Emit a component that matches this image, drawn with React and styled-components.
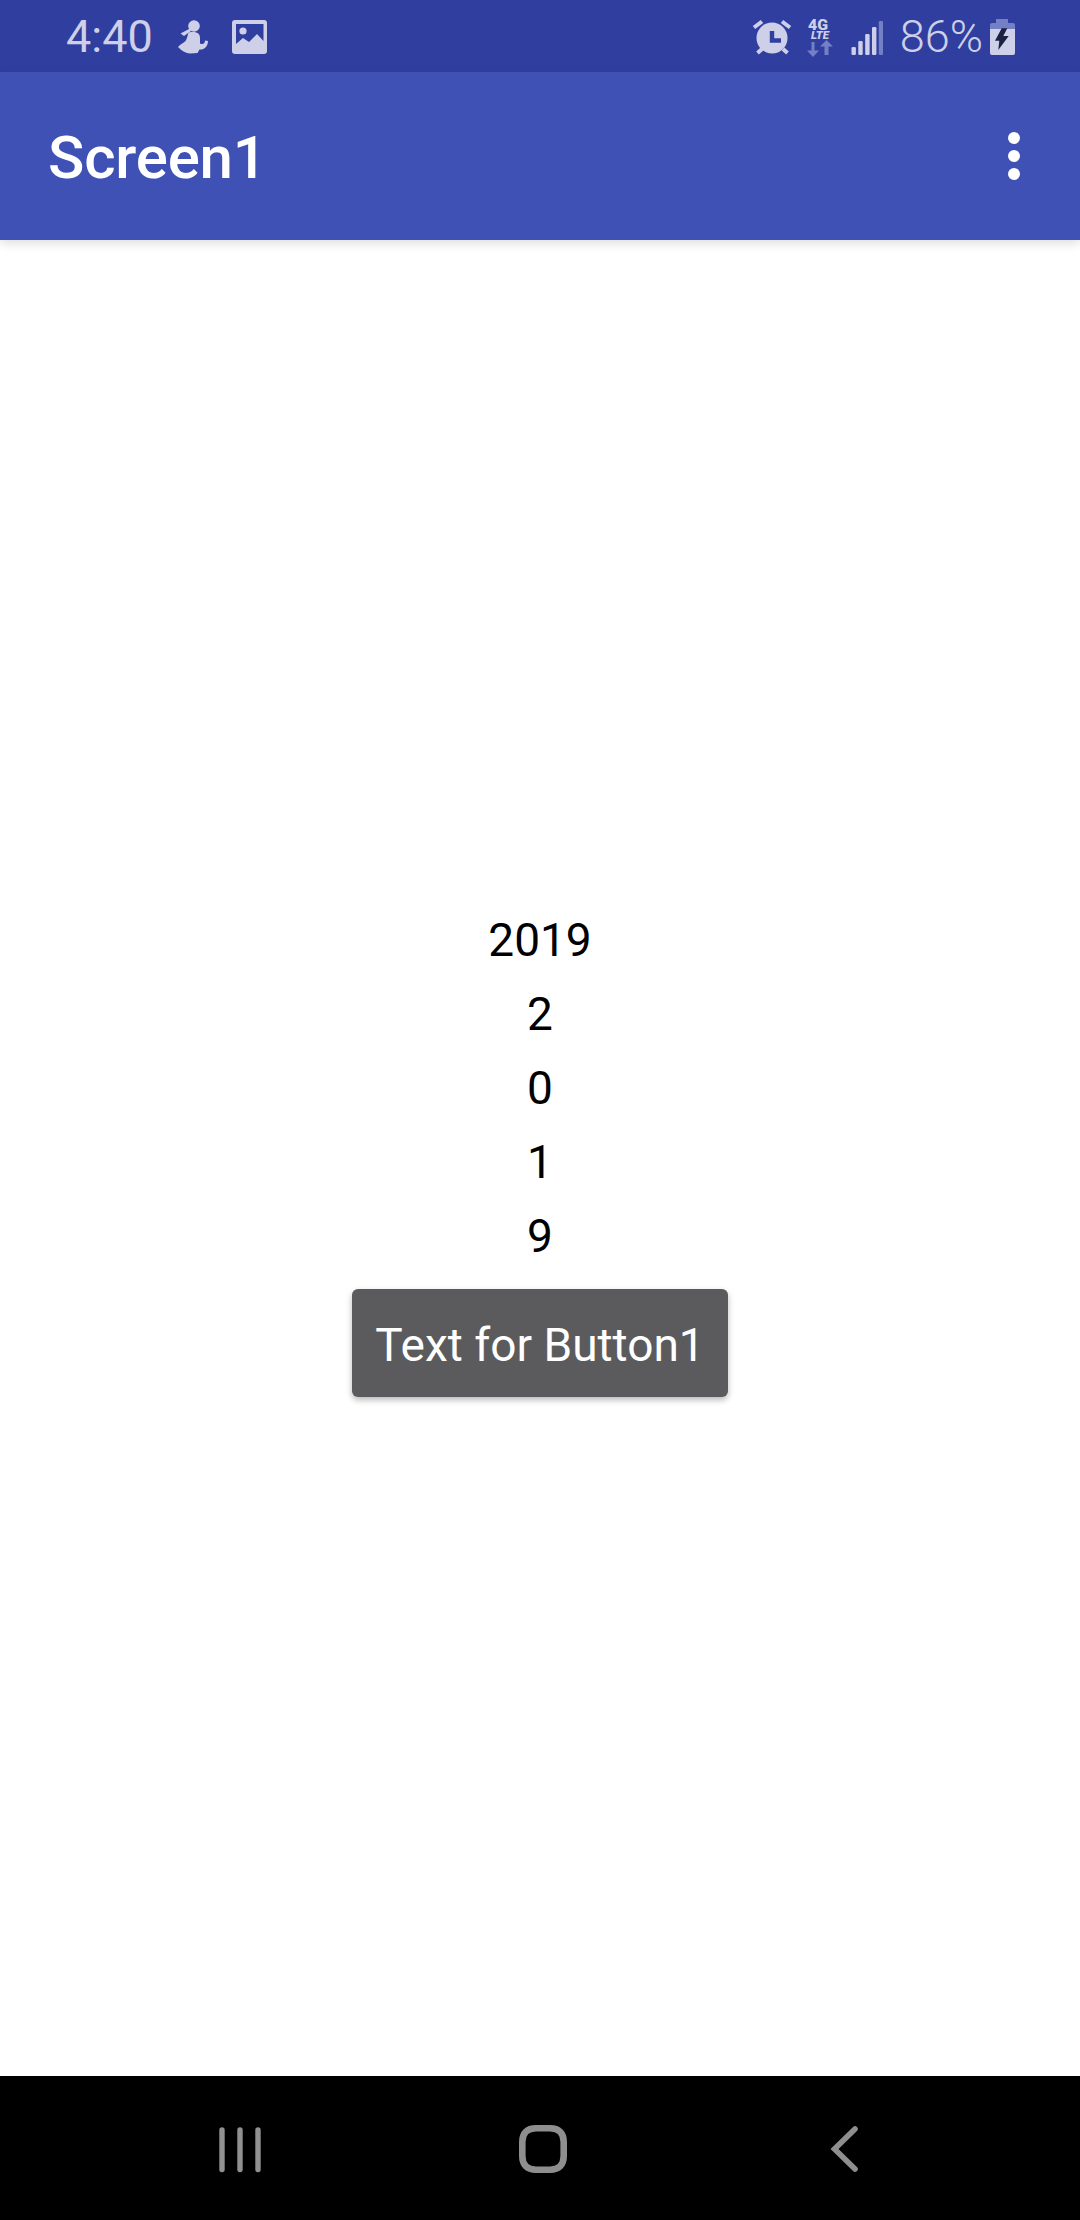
import React from "react";
import styled, { createGlobalStyle } from "styled-components";

const LIGHT = "#cdd0e8";
const DIM = "#7480c6";
const BAR = "#303f9f";

const Global = createGlobalStyle`
  html, body { margin: 0; padding: 0; background: #fff; }
  #root { width: 1080px; height: 2220px; }
  * { box-sizing: border-box; }
`;

const Screen = styled.div`
  width: 1080px;
  height: 2220px;
  display: flex;
  flex-direction: column;
  font-family: Roboto, "Liberation Sans", sans-serif;
  background: #fff;
  overflow: hidden;
`;

const StatusBar = styled.div`
  height: 72px;
  flex: none;
  background: ${BAR};
  display: flex;
  justify-content: space-between;
  padding: 0 65px 0 66px;
  color: ${LIGHT};
`;

const StatusGroup = styled.div`
  display: flex;
  align-items: flex-start;
`;

const StatusText = styled.span`
  font-size: ${(p) => p.$size}px;
  font-weight: ${(p) => p.$weight};
  line-height: 74px;
  height: 72px;
  margin-right: ${(p) => p.$gap}px;
`;

const StatusIcon = styled.svg`
  display: block;
  flex: none;
  margin-right: ${(p) => p.$gap || 0}px;
`;

const AppBar = styled.header`
  height: 168px;
  flex: none;
  background: #3f51b5;
  display: flex;
  align-items: center;
  justify-content: space-between;
  padding: 0 60px 0 48px;
  box-shadow: 0 3px 10px rgba(0, 0, 0, 0.14);
  position: relative;
  z-index: 1;
`;

const Title = styled.h1`
  margin: 0;
  padding-top: 4px;
  color: #fff;
  font-size: 60px;
  font-weight: 500;
  line-height: 164px;
  letter-spacing: -0.2px;
`;

const Overflow = styled.div`
  display: flex;
  flex-direction: column;
  gap: 6px;
`;

const Dot = styled.span`
  width: 12px;
  height: 12px;
  border-radius: 50%;
  background: #fff;
`;

const Content = styled.main`
  flex: 1;
  display: flex;
  flex-direction: column;
  align-items: center;
  justify-content: center;
`;

const Label = styled.div`
  font-size: 46px;
  line-height: 74px;
  height: 74px;
  color: #000;
  text-align: center;
`;

const Button = styled.button`
  margin: 16px 0;
  width: 376px;
  height: 108px;
  padding: 3px 0 0;
  border: 0;
  border-radius: 6px;
  background: #5b5b5d;
  color: #fff;
  font-family: inherit;
  font-size: 46px;
  box-shadow: 0 3px 6px rgba(0, 0, 0, 0.28);
`;

const NavBar = styled.nav`
  height: 144px;
  flex: none;
  background: #000;
  display: flex;
  align-items: center;
  padding: 2px 0 0;
`;

const NavIcon = styled.svg`
  display: block;
  flex: none;
  margin-left: ${(p) => p.$left}px;
`;

const PersonIcon = () => (
  <StatusIcon width="32" height="72" viewBox="177 0 32 72" $gap={23}>
    <circle cx="194" cy="26" r="5.8" fill={LIGHT} />
    <path d="M180.5 33.5 L190 28.5 L191 31 L184 36 Z" fill={LIGHT} />
    <path
      d="M188.5 32.5 C197 31 200 33.5 200 38 L200 43.5 C203 45 205 43.5 205 40.5 L208 41 C208 46.5 204 50 199.5 49.5 L197.5 53 L190 53.4 C186 53.4 182 51 178 47 C180 44 183.5 43.5 185.5 41 C187 39 187.5 36 188.5 32.5 Z"
      fill={LIGHT}
    />
  </StatusIcon>
);

const ImageIcon = () => (
  <StatusIcon width="35" height="72" viewBox="232 0 35 72">
    <rect x="232" y="20" width="35" height="34" rx="3" fill={LIGHT} />
    <path d="M236 24 H263.5 V41 L257 34 L249 42 L243 38 L236 44 Z" fill={BAR} />
    <circle cx="243" cy="31" r="3.6" fill={LIGHT} />
  </StatusIcon>
);

const AlarmIcon = () => (
  <StatusIcon width="40" height="72" viewBox="752 0 40 72" $gap={14}>
    <circle cx="772" cy="38" r="15.5" fill={LIGHT} />
    <path d="M754 27.5 L762 21.5 M790 27.5 L782 21.5 M757.5 53 L762 49 M787.5 53 L783 49" stroke={LIGHT} strokeWidth="4" fill="none" />
    <path d="M772 31 V40.5 H781" stroke={BAR} strokeWidth="4.4" fill="none" />
  </StatusIcon>
);

const NetworkIcon = () => (
  <StatusIcon width="28" height="72" viewBox="806 0 28 72" $gap={17}>
    <text x="808" y="30" fontFamily="Roboto, sans-serif" fontWeight="900" fontSize="15.5" textLength="20" lengthAdjust="spacingAndGlyphs" fill={LIGHT}>4G</text>
    <text x="811" y="39" fontFamily="Roboto, sans-serif" fontWeight="900" fontStyle="italic" fontSize="10.5" textLength="18" lengthAdjust="spacingAndGlyphs" fill={LIGHT}>LTE</text>
    <path d="M811.5 42 H814.5 V50.5 H819 L813 57 L807 50.5 H811.5 Z" fill={DIM} />
    <path d="M826.5 40 L833 46.5 H828.5 V55 H824.5 V46.5 H820 Z" fill={DIM} />
  </StatusIcon>
);

const SignalIcon = () => (
  <StatusIcon width="33" height="72" viewBox="851 0 33 72" $gap={15.5}>
    <rect x="851.5" y="47" width="4.4" height="8" rx="1.2" fill={LIGHT} />
    <rect x="858.3" y="41" width="4.4" height="14" rx="1.2" fill={LIGHT} />
    <rect x="865.2" y="34" width="4.4" height="21" rx="1.2" fill={LIGHT} />
    <rect x="872" y="27" width="4.4" height="28" rx="1.2" fill={LIGHT} />
    <rect x="878.8" y="21" width="4.2" height="34" rx="1.2" fill={DIM} />
  </StatusIcon>
);

const BatteryIcon = () => (
  <StatusIcon width="25" height="72" viewBox="990 0 25 72">
    <path d="M996 19 H1008 V23 H1013 Q1015 23 1015 25 V29 H990 V25 Q990 23 992 23 H996 Z" fill={DIM} />
    <path d="M990 29 H1015 V53 Q1015 55 1013 55 H992 Q990 55 990 53 Z" fill={LIGHT} />
    <path d="M1001.7 28.3 L995 40.7 H999.3 L998.3 50 L1008.7 36 H1003.3 L1007.3 28.3 Z" fill="#1d2040" />
  </StatusIcon>
);

const MenuNavIcon = () => (
  <NavIcon width="44" height="48" viewBox="218 2125 44 48" $left={218}>
    <path d="M222 2130 V2169.5 M240 2130 V2169.5 M258 2130 V2169.5" stroke="#919191" strokeWidth="5.4" strokeLinecap="round" fill="none" />
  </NavIcon>
);

const HomeNavIcon = () => (
  <NavIcon width="50" height="50" viewBox="517 2124 50 50" $left={256}>
    <path
      d="M535 2128.3 H549 C558 2128.3 562.7 2133 562.7 2142 V2156 C562.7 2165 558 2169.7 549 2169.7 H535 C526 2169.7 521.3 2165 521.3 2156 V2142 C521.3 2133 526 2128.3 535 2128.3 Z"
      stroke="#8e8e8e"
      strokeWidth="6.6"
      fill="none"
    />
  </NavIcon>
);

const BackNavIcon = () => (
  <NavIcon width="30" height="50" viewBox="830 2124 30 50" $left={262}>
    <path d="M855 2129 L834.5 2149 L855 2169" stroke="#8e8e8e" strokeWidth="5.6" strokeLinecap="round" strokeLinejoin="miter" fill="none" />
  </NavIcon>
);

export default function App() {
  return (
    <Screen>
      <Global />
      <StatusBar>
        <StatusGroup>
          <StatusText $size={45} $weight={400} $gap={24.5}>4:40</StatusText>
          <PersonIcon />
          <ImageIcon />
        </StatusGroup>
        <StatusGroup>
          <AlarmIcon />
          <NetworkIcon />
          <SignalIcon />
          <StatusText $size={45} $weight={300} $gap={7}>86%</StatusText>
          <BatteryIcon />
        </StatusGroup>
      </StatusBar>
      <AppBar>
        <Title>Screen1</Title>
        <Overflow>
          <Dot />
          <Dot />
          <Dot />
        </Overflow>
      </AppBar>
      <Content>
        <Label>2019</Label>
        <Label>2</Label>
        <Label>0</Label>
        <Label>1</Label>
        <Label>9</Label>
        <Button>Text for Button1</Button>
      </Content>
      <NavBar>
        <MenuNavIcon />
        <HomeNavIcon />
        <BackNavIcon />
      </NavBar>
    </Screen>
  );
}
